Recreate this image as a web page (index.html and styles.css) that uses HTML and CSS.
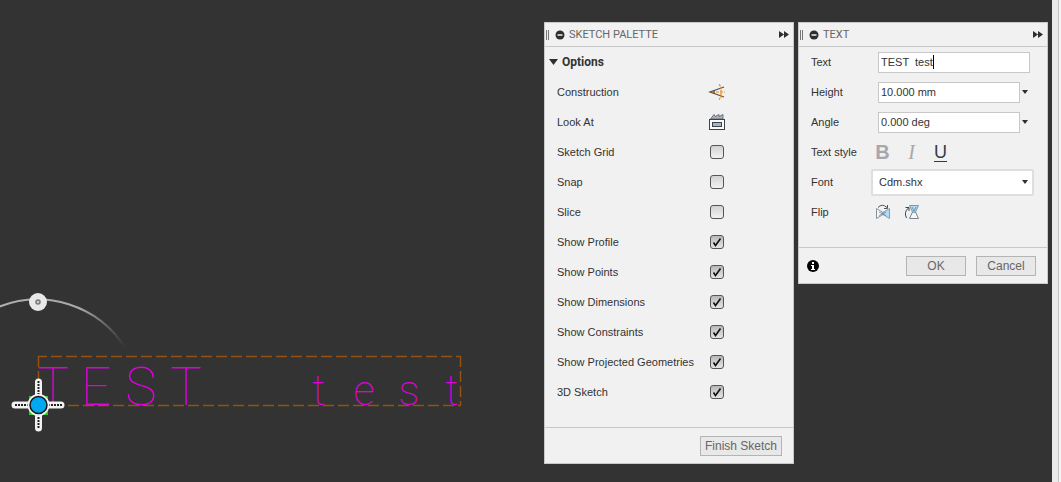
FILE: index.html
```html
<!DOCTYPE html>
<html lang="en">
<head>
<meta charset="utf-8">
<title>Sketch</title>
<link rel="stylesheet" href="styles.css">
</head>
<body>
<main class="viewport">
  <svg class="canvas" width="540" height="482" aria-label="Sketch canvas">
    <defs>
      <linearGradient id="arc" gradientUnits="userSpaceOnUse" x1="0" y1="0" x2="125" y2="0">
        <stop offset="0" stop-color="#b0b0b0"/><stop offset=".65" stop-color="#a8a8a8"/><stop offset="1" stop-color="#a8a8a8" stop-opacity="0"/>
      </linearGradient>
    </defs>
    <path d="M-4 308A104 104 0 0 1 126 349" fill="none" stroke="url(#arc)" stroke-width="2"/>
    <g fill="none" stroke="#96500f" stroke-width="1.5">
      <path d="M38 356.500H461" stroke-dasharray="11 4" stroke-dashoffset="2"/>
      <path d="M38 405.500H461" stroke-dasharray="11 4"/>
      <path d="M38.500 356V405M460.500 356V405" stroke-dasharray="11 4"/>
    </g>
    <text class="stroke-caps" y="405" x="53 96 141 186">TEST</text>
    <text class="stroke-small" y="405" x="319 364 409 452">test</text>
    <circle cx="38" cy="302" r="9" fill="#e8e8e8"/>
    <circle cx="38" cy="302" r="2" fill="#ccc" stroke="#777" stroke-width="1.500"/>
    <path d="M29 396h19v19H29z" fill="#1fd01f"/>
    <path d="M38.500 382V428M15 405H61" stroke="#f2f2f2" stroke-width="7" stroke-linecap="round"/>
    <path d="M38.500 381V429M15 405H63" stroke="#222" stroke-width="2" stroke-dasharray="2 1"/>
    <circle cx="38.500" cy="405" r="11" fill="#f2f2f2"/>
    <circle cx="38.500" cy="405" r="8.500" fill="#00a8f0" stroke="#151515" stroke-width="1.500"/>
  </svg>

  <section class="panel" aria-label="Sketch palette">
    <header class="panel-head">
      <span class="grip"></span>
      <button class="bare" aria-label="Collapse"><svg width="10" height="10"><circle cx="5" cy="5" r="4.500" fill="#2e2e2e"/><path d="M2.500 5h5" stroke="#f0f0f0" stroke-width="1.500"/></svg></button>
      <h2 class="title">SKETCH PALETTE</h2>
      <button class="bare" aria-label="Dock"><svg width="10" height="7"><path d="M0 0l5 3.500-5 3.500zM5 0l5 3.500-5 3.500z" fill="#2e2e2e"/></svg></button>
    </header>
    <div class="panel-body">
      <button class="row group"><svg width="9" height="6"><path d="M0 0h9L4.500 6z" fill="#2e2e2e"/></svg>Options</button>
      <div class="row option"><span>Construction</span><button class="bare" aria-label="Construction">
        <svg width="18" height="18" fill="none"><path d="M16 4L2 9l14 5" stroke="#555" stroke-width="1.300"/><path d="M2 9l5-2v4z" fill="#555"/><path d="M4 9h13" stroke="#f08a1c" stroke-width="1.200" stroke-dasharray="3 1"/><path d="M11 1.500l2 2v11l-2 2" stroke="#f08a1c" stroke-width="1.400" stroke-dasharray="2 1"/></svg></button></div>
      <div class="row option"><span>Look At</span><button class="bare" aria-label="Look At">
        <svg width="18" height="18" fill="none"><path d="M2.500 6L6 1.500 7 3.500 11 1.500v2l4-2V6z" fill="#a9b2bc" stroke="#555d66" stroke-width=".8"/><rect x="1.500" y="6.500" width="15" height="10" fill="#fafafa" stroke="#39424d"/><rect x="4.500" y="9.500" width="9" height="4" fill="#a9b2bc" stroke="#39424d"/></svg></button></div>
      <div class="row option"><label for="grid">Sketch Grid</label><input class="check" type="checkbox" id="grid"></div>
      <div class="row option"><label for="snap">Snap</label><input class="check" type="checkbox" id="snap"></div>
      <div class="row option"><label for="slice">Slice</label><input class="check" type="checkbox" id="slice"></div>
      <div class="row option"><label for="profile">Show Profile</label><input class="check" type="checkbox" id="profile" checked></div>
      <div class="row option"><label for="points">Show Points</label><input class="check" type="checkbox" id="points" checked></div>
      <div class="row option"><label for="dims">Show Dimensions</label><input class="check" type="checkbox" id="dims" checked></div>
      <div class="row option"><label for="cons">Show Constraints</label><input class="check" type="checkbox" id="cons" checked></div>
      <div class="row option"><label for="proj">Show Projected Geometries</label><input class="check" type="checkbox" id="proj" checked></div>
      <div class="row option"><label for="three">3D Sketch</label><input class="check" type="checkbox" id="three" checked></div>
    </div>
    <footer class="panel-foot"><button class="action finish">Finish Sketch</button></footer>
  </section>

  <section class="panel" aria-label="Text">
    <header class="panel-head">
      <span class="grip"></span>
      <button class="bare" aria-label="Collapse"><svg width="10" height="10"><circle cx="5" cy="5" r="4.500" fill="#2e2e2e"/><path d="M2.500 5h5" stroke="#f0f0f0" stroke-width="1.500"/></svg></button>
      <h2 class="title">TEXT</h2>
      <button class="bare" aria-label="Dock"><svg width="10" height="7"><path d="M0 0l5 3.500-5 3.500zM5 0l5 3.500-5 3.500z" fill="#2e2e2e"/></svg></button>
    </header>
    <div class="panel-body">
      <div class="row prop"><label for="txt">Text</label><span class="entry"><input class="field" id="txt" value="TEST  test"><i class="caret"></i></span></div>
      <div class="row prop"><label for="hgt">Height</label><input class="field" id="hgt" value="10.000 mm"><button class="bare drop" aria-label="Height values"><svg width="6" height="4"><path d="M0 0h6L3 4z" fill="#2e2e2e"/></svg></button></div>
      <div class="row prop"><label for="ang">Angle</label><input class="field" id="ang" value="0.000 deg"><button class="bare drop" aria-label="Angle values"><svg width="6" height="4"><path d="M0 0h6L3 4z" fill="#2e2e2e"/></svg></button></div>
      <div class="row prop tools"><span>Text style</span><button class="style bold">B</button><button class="style italic">I</button><button class="style under">U</button></div>
      <div class="row prop wide"><label for="font">Font</label><span class="picker"><select id="font"><option>Cdm.shx</option></select><svg class="picker-arrow" width="6" height="4"><path d="M0 0h6L3 4z" fill="#2e2e2e"/></svg></span></div>
      <div class="row prop tools"><span>Flip</span>
        <button class="style" aria-label="Flip horizontally"><svg width="16" height="16" fill="none"><path d="M1.500 4.500L8 8.500v2l-6.500 4z" fill="#f4f8fb" stroke="#8a939b"/><path d="M8 8.500l6.500-4v10L8 10.500z" fill="#b4daf4" stroke="#7aa3c0"/><path d="M4 8l7 3.500M4 11.500L11 8" stroke="#5f8198" stroke-width=".8"/><path d="M3 3.500q4-4.500 9 0M12.500 1v3.500H9" stroke="#555"/></svg></button>
        <button class="style" aria-label="Flip vertically"><svg width="16" height="16" fill="none"><path d="M8.500 8h3l3 6.500h-9z" fill="#f4f6f8" stroke="#7b848c"/><path d="M5.500 1.500h9l-3 6.500h-3z" fill="#b4daf4" stroke="#6a9dc0"/><path d="M8 3l2 4 2-4" stroke="#5f8198" stroke-width=".8"/><path d="M2.500 14Q-.5 8 4.500 4M1.500 3.500H5V7" stroke="#444"/></svg></button></div>
    </div>
    <footer class="panel-foot">
      <button class="bare info" aria-label="Information"><svg width="12" height="12"><circle cx="6" cy="6" r="6" fill="#000"/><path d="M5 2h2v2H5zM4 5h3v4h1v1H4V9h1V6H4z" fill="#fff"/></svg></button>
      <button class="action">OK</button><button class="action">Cancel</button>
    </footer>
  </section>
</main>
<aside class="edge"></aside>
</body>
</html>
```
FILE: styles.css
```css
* { box-sizing: border-box; }
body {
  margin: 0;
  min-height: 100vh;
  display: flex;
  background: #333;
  color: #333;
  font: 11px/14px "Liberation Sans", Arial, sans-serif;
}
button, input, select { font: inherit; color: inherit; margin: 0; }
svg { display: block; }

.viewport {
  position: relative;
  flex: 1;
  display: flex;
  justify-content: flex-end;
  align-items: flex-start;
  gap: 4px;
  padding: 22px 4px 0 0;
}
.canvas { position: absolute; left: 0; top: 0; }
.stroke-caps, .stroke-small {
  fill: #e000e0;
  font-family: Roboto, "Liberation Sans", sans-serif;
  font-weight: 100;
  text-anchor: middle;
}
.stroke-caps { font-size: 53px; }
.stroke-small { font-size: 42px; }
.edge { width: 9px; background: #eaeaea; border-right: 2px solid #f4f4f4; box-shadow: inset -1px 0 #c4c4c4; }

.panel {
  position: relative;
  width: 250px;
  background: #f1f1f1;
  border: 1px solid #c8c8c8;
}
.panel-head {
  display: flex;
  align-items: center;
  height: 24px;
  padding: 0 4px 0 1px;
  border-bottom: 1px solid #c8c8c8;
}
.grip { width: 3px; height: 10px; margin-right: 6px; border: solid #777; border-width: 0 1px; }
.title { flex: 1; margin: 0 0 0 4px; font: 11px/14px Roboto, sans-serif; color: #666; }
.bare { display: flex; padding: 0; border: 0; background: none; }
.panel-body { padding-bottom: 20px; }
.row { display: flex; align-items: center; height: 30px; padding-left: 12px; }
.group { width: 100%; gap: 4px; padding-left: 4px; border: 0; background: none; font: bold 12px/14px Roboto, sans-serif; }
.option { display: grid; grid-template-columns: 151px 18px; justify-items: center; }
.option > :first-child { justify-self: start; }
.check {
  appearance: none;
  width: 14px;
  height: 14px;
  border: 1px solid #555;
  border-radius: 3px;
  background: linear-gradient(#d2d2d2, #f2f2f2);
}
.check:checked {
  background:
    url("data:image/svg+xml,%3Csvg xmlns='http://www.w3.org/2000/svg' width='12' height='12'%3E%3Cpath d='M2.500 6.500L4.500 9.500L9.500 2.500' fill='none' stroke='%23111' stroke-width='1.600'/%3E%3C/svg%3E") center no-repeat,
    linear-gradient(#b8b8b8, #e4e4e4);
}

.panel-foot {
  display: flex;
  align-items: center;
  justify-content: flex-end;
  gap: 10px;
  height: 36px;
  padding-right: 11px;
  border-top: 1px solid #c8c8c8;
}
.action {
  width: 60px;
  height: 20px;
  padding: 0;
  border: 1px solid #b4b4b4;
  background: #e8e8e8;
  color: #666;
  font-size: 12px;
}
.finish { width: 82px; }
.info { margin: 0 auto 0 8px; }

.prop > :first-child { width: 67px; }
.tools > :first-child { width: 57px; }
.wide > :first-child { width: 60px; }
.field {
  flex: 1;
  min-width: 0;
  height: 21px;
  padding: 0 2px;
  border: 1px solid #c8c8c8;
  background: #fff;
  outline: 0;
}
.entry { position: relative; flex: 1; display: flex; margin-right: 17px; }
.caret { position: absolute; left: 55px; top: 3px; width: 1px; height: 14px; background: #000; }
.drop { margin: 0 19px 0 2px; }
.style { display: grid; place-items: center; width: 29px; height: 24px; padding: 0; border: 0; background: none; color: #a8a8ac; font-size: 20px; line-height: 22px; }
.bold { font-weight: bold; }
.italic { font-family: "Liberation Serif", serif; font-style: italic; }
.under { color: #333b47; font-size: 18px; text-decoration: underline; text-decoration-thickness: 1px; text-underline-offset: 3px; }
.picker { position: relative; flex: 1; margin-right: 13px; }
.picker select {
  appearance: none;
  display: block;
  width: 100%;
  height: 27px;
  padding: 0 6px;
  border: 2px solid #dedede;
  border-radius: 2px;
  background: #fff;
}
.picker-arrow { position: absolute; right: 6px; top: 11px; pointer-events: none; }
```
